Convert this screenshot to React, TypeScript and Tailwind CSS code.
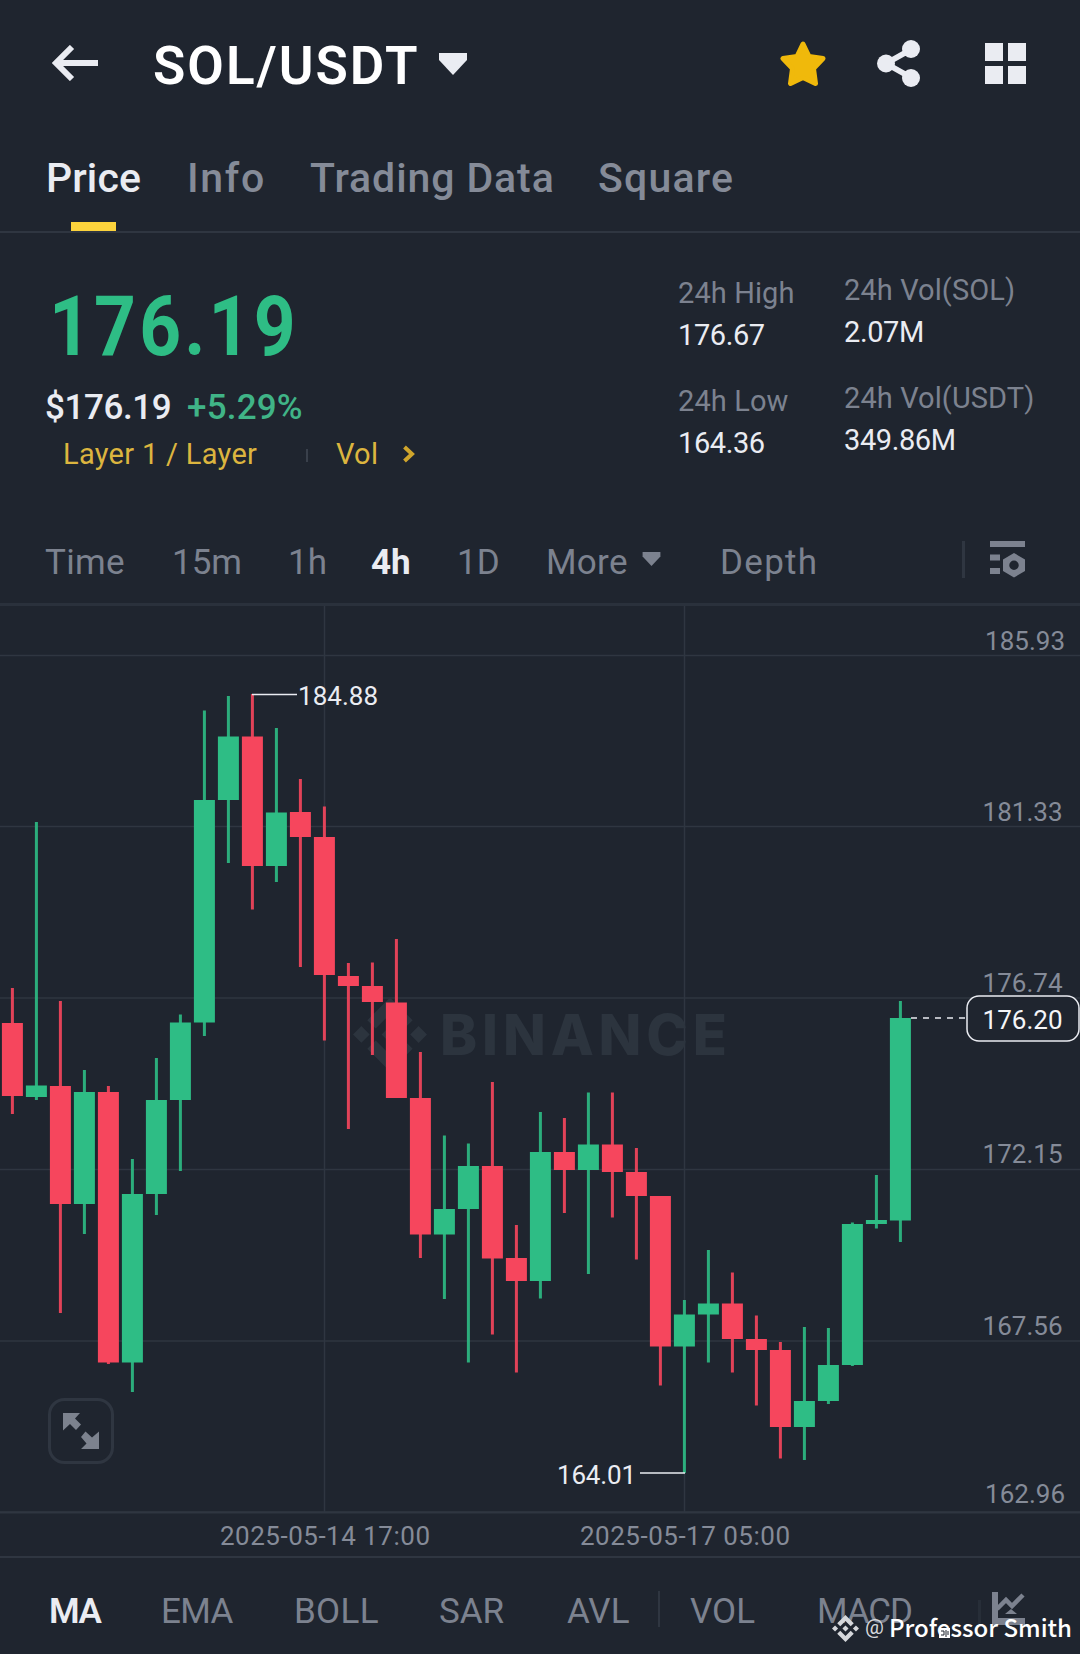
import { useState } from 'react';
import { SiBinance } from 'react-icons/si';

const GREEN = '#2ebd85';
const RED = '#f6465d';
const GRID = '#2f3641';
const MUTED = '#858b98';

const tabs = [
    { label: 'Price', width: 'w-[141px] tracking-[0.1px]' },
    { label: 'Info', width: 'w-[123px] tracking-[1.7px]' },
    { label: 'Trading Data', width: 'w-[288px] tracking-[0.9px]' },
    { label: 'Square', width: 'w-[160px] tracking-[1.2px]' },
];

const stats = [
    [
        { label: '24h High', value: '176.67' },
        { label: '24h Low', value: '164.36' },
    ],
    [
        { label: '24h Vol(SOL)', value: '2.07M' },
        { label: '24h Vol(USDT)', value: '349.86M' },
    ],
];

const periods = [
    { label: 'Time', width: 'w-[127px] tracking-[0.3px]' },
    { label: '15m', width: 'w-[116px]' },
    { label: '1h', width: 'w-[83px]' },
    { label: '4h', width: 'w-[86px]' },
    { label: '1D', width: 'w-[89px]' },
    { label: 'More', width: 'w-[174px] tracking-[0.3px]', caret: true },
    { label: 'Depth', width: 'w-[242px] tracking-[1.3px]' },
];

const mainIndicators = [
    { label: 'MA', width: 'w-[112px] tracking-[-1.5px]' },
    { label: 'EMA', width: 'w-[133px] tracking-[-0.6px]' },
    { label: 'BOLL', width: 'w-[145px] tracking-[0.3px]' },
    { label: 'SAR', width: 'w-[128px]' },
    { label: 'AVL', width: 'w-[91px]' },
];

const subIndicators = [
    { label: 'VOL', width: 'w-[127px]' },
    { label: 'MACD', width: 'w-[161px] tracking-[-1.1px]' },
];

// [up, high, bodyTop, bodyBottom, low] in chart units
const candles: [boolean, number, number, number, number][] = [
    [false, 988, 1023, 1096, 1114],
    [true, 822, 1085.5, 1097, 1100],
    [false, 1001, 1086, 1204, 1313],
    [true, 1070, 1092, 1204, 1234],
    [false, 1086, 1092, 1362.5, 1364],
    [true, 1159, 1194, 1362.5, 1392],
    [true, 1058, 1100, 1194, 1215],
    [true, 1014.5, 1022.5, 1100, 1171],
    [true, 710.5, 800, 1022.5, 1036],
    [true, 696, 736.5, 800, 863],
    [false, 694, 736.5, 866, 909.5],
    [true, 728, 812.5, 866, 882],
    [false, 779, 812, 837, 967],
    [false, 806.5, 837, 975, 1040.5],
    [false, 963, 976, 986, 1129],
    [false, 962.5, 986, 1002, 1055],
    [false, 939, 1002.5, 1098, 1098],
    [false, 1052, 1098, 1234.5, 1258],
    [true, 1135.5, 1209, 1234.5, 1299],
    [true, 1143.5, 1166, 1209, 1362.5],
    [false, 1082, 1166, 1258.5, 1334.5],
    [false, 1225, 1258, 1281, 1372.5],
    [true, 1112, 1152, 1281, 1298.5],
    [false, 1118, 1152, 1170, 1213],
    [true, 1092.5, 1144.5, 1170, 1274],
    [false, 1092.5, 1144.5, 1172, 1217.5],
    [false, 1148, 1172, 1196, 1259.5],
    [false, 1196, 1196, 1346.5, 1385.5],
    [true, 1300, 1314.5, 1346.5, 1473],
    [true, 1250, 1303.5, 1314.5, 1362.5],
    [false, 1272.5, 1303.5, 1339, 1372.5],
    [false, 1315.5, 1339, 1350, 1405.5],
    [false, 1342, 1350, 1427, 1458.5],
    [true, 1327, 1401, 1427, 1460],
    [true, 1328, 1365, 1401, 1404],
    [true, 1222.5, 1224, 1365, 1366],
    [true, 1175, 1220, 1224, 1228.5],
    [true, 1001, 1018, 1220.5, 1242],
];

const priceTicks = [
    { line: 655.5, label: '185.93', x: 985, y: 650 },
    { line: 826.5, label: '181.33', x: 982.5, y: 821 },
    { line: 998, label: '176.74', x: 982.5, y: 992 },
    { line: 1169.5, label: '172.15', x: 982.5, y: 1163 },
    { line: 1341, label: '167.56', x: 982.5, y: 1334.5 },
    { line: 1512, label: '162.96', x: 985, y: 1503 },
];

const Caret = ({ className }: { className: string }) => (
    <svg viewBox="0 0 28 22" className={className} fill="currentColor">
        <path d="M0 0H28V7L14 22L0 7Z" />
    </svg>
);

const Header = () => (
    <header className="h-[126px] flex items-center text-[#eaecf2]">
        <svg viewBox="0 0 46 36" className="w-[46px] h-[36px] ml-[52px]" fill="none" stroke="currentColor" strokeWidth="6">
            <path d="M20 2L4 18L20 34M4 18H46" />
        </svg>
        <h1 className="mt-[6px] ml-[55px] w-[286px] text-[53px] font-semibold leading-none tracking-[2px] text-white">SOL/USDT</h1>
        <Caret className="w-[28px] h-[22px] mt-[1px]" />
        <svg viewBox="0 0 46 48" className="w-[46px] h-[48px] ml-[313px] mt-[2px]" fill="#f0b90b" stroke="#f0b90b" strokeWidth="5" strokeLinejoin="round">
            <path d="M23 4L29 16.5L43 18.5L33.5 28.5L35.5 43.5L23 37.5L10.5 43.5L12.5 28.5L3 18.5L17 16.5Z" />
        </svg>
        <svg viewBox="0 0 43 47" className="w-[43px] h-[47px] ml-[51px]" fill="currentColor">
            <path d="M9 23.5L34 9.5M9 23.5L34 37.5" stroke="currentColor" strokeWidth="5.5" />
            <circle cx="9" cy="23.5" r="9" />
            <circle cx="34" cy="9" r="9" />
            <circle cx="34" cy="38" r="9" />
        </svg>
        <div className="ml-[65px] grid grid-cols-2 gap-[5px]">
            {[0, 1, 2, 3].map((i) => (
                <span key={i} className="w-[18px] h-[18px] bg-[#eaecf2]" />
            ))}
        </div>
    </header>
);

const Ticker = () => (
    <section className="h-[288px] flex">
        <div className="w-[678px] pt-[49px]">
            <div className="ml-[49px] origin-left scale-x-[0.88] text-[83px] leading-[90px] font-bold tracking-[3.6px] text-[#2ebd85]">176.19</div>
            <div className="mt-[14px] pl-[45px] flex text-[35px] leading-[44px] font-medium">
                <span className="w-[142px] tracking-[-0.4px] text-[#eaecf2]">$176.19</span>
                <span className="tracking-[0.2px] text-[#40b487]">+5.29%</span>
            </div>
            <div className="mt-[5px] pl-[63px] h-[40px] flex items-center text-[29px] text-[#dcb53f]">
                <span className="w-[243px] tracking-[0.3px]">Layer 1 / Layer</span>
                <span className="w-[2px] h-[13px] bg-[#39404b]" />
                <span className="ml-[28px] w-[67px] tracking-[0.3px]">Vol</span>
                <svg viewBox="0 0 12 18" className="w-[12px] h-[18px] mb-[2px]" fill="none" stroke="#cfa52c" strokeWidth="4">
                    <path d="M1.5 2L9 9L1.5 16" />
                </svg>
            </div>
        </div>
        {stats.map((column, i) => (
            <div key={i} className={`flex flex-col gap-6 ${i === 0 ? 'w-[166px] pt-[39px]' : 'pt-[36px]'}`}>
                {column.map((stat) => (
                    <div key={stat.label} className="text-[29px] leading-[42px]">
                        <div className="whitespace-nowrap tracking-[0.1px] text-[#7c828f]">{stat.label}</div>
                        <div className="text-[#eaecf2] tracking-[-0.4px]">{stat.value}</div>
                    </div>
                ))}
            </div>
        ))}
    </section>
);

const Chart = () => (
    <svg viewBox="0 606 1080 950" className="block w-[1080px] h-[950px]" fontSize="26" fill={MUTED}>
        <g stroke={GRID} strokeWidth="1.5">
            {priceTicks.map((tick) => (
                <line key={tick.label} x1="0" x2="1080" y1={tick.line} y2={tick.line} />
            ))}
            <line x1="324.5" x2="324.5" y1="606" y2="1512" />
            <line x1="684.5" x2="684.5" y1="606" y2="1512" />
        </g>

        <g fill="#2c343e">
            <SiBinance x="353" y="997.5" size={74} color="#2c343e" />
            <text x="440" y="1054.5" fontSize="56" fontWeight="800" fontFamily="Inter, sans-serif" textLength="287">BINANCE</text>
        </g>

        {candles.map(([up, high, top, bottom, low], i) => {
            const cx = 12.4 + i * 24;
            return (
                <g key={i} fill={up ? GREEN : RED}>
                    <rect x={cx - 1.5} y={high} width="3" height={low - high} opacity="0.9" />
                    <rect x={cx - 10.5} y={top} width="21" height={bottom - top} />
                </g>
            );
        })}

        {priceTicks.map((tick) => (
            <text key={tick.label} x={tick.x} y={tick.y} textLength="80">{tick.label}</text>
        ))}

        {/* High / low markers */}
        <g stroke="#eaecf2" strokeWidth="1.5">
            <line x1="252" x2="297" y1="694.5" y2="694.5" />
            <line x1="640" x2="685" y1="1473" y2="1473" />
            <line x1="911" x2="966" y1="1018" y2="1018" strokeDasharray="6 6" />
        </g>
        <g fill="#eaecf2">
            <text x="298" y="705" textLength="80">184.88</text>
            <text x="557" y="1483.5" textLength="79">164.01</text>
        </g>

        <rect x="967" y="996" width="112" height="45" rx="12" fill="#1f252f" stroke="#eaecf2" strokeWidth="1.5" />
        <text x="982.5" y="1028.5" textLength="80" fill="#f4f5f8">176.20</text>

        <line x1="0" x2="1080" y1="1512.5" y2="1512.5" stroke={GRID} strokeWidth="2" />
        <text x="220" y="1544.5" textLength="210">2025-05-14 17:00</text>
        <text x="580" y="1544.5" textLength="210">2025-05-17 05:00</text>

        {/* Fullscreen toggle */}
        <rect x="49.5" y="1399.5" width="63" height="63" rx="15" fill="none" stroke="#2f3641" strokeWidth="3" />
        <g fill="#7c828e">
            <path d="M63 1413H80L75 1418.5L81 1424.5L76 1430L70 1424L63 1430.5Z" />
            <path d="M99 1449H81L86.5 1443.5L81 1437L85.5 1431.5L92 1437.5L99 1431.5Z" />
        </g>
    </svg>
);

const AuthorTag = () => (
    <div className="absolute left-[832px] top-[1605px] flex items-center h-[44px] text-white">
        <SiBinance size={27} color="#d5d7db" className="mt-[2px]" />
        <span className="ml-[6px] w-[24px] text-[21px] text-[#d5d7db] font-[Roboto,sans-serif] leading-none">@</span>
        <span className="text-[24px] font-medium font-['Noto_Sans_CJK_SC',sans-serif] leading-[44px] whitespace-nowrap">Professor Smith</span>
        <svg viewBox="0 0 11 10" className="absolute left-[107px] top-[23px] w-[11px] h-[10px]">
            <path d="M0 0H11V10H0Z" fill="#ffffff" />
            <path d="M2 3H5V7H2M7 2V9M9 3V7" stroke="#1f252f" strokeWidth="1" fill="none" />
        </svg>
    </div>
);

export default function App() {
    const [tab, setTab] = useState('Price');
    const [period, setPeriod] = useState('4h');
    const [indicator, setIndicator] = useState('MA');

    return (
        <div className="relative w-[1080px] h-[1654px] overflow-hidden bg-[#1f252f] font-[Roboto,sans-serif]">
            <Header />

            <nav className="h-[107px] flex pl-[46px] border-b-2 border-[#2f3641] text-[41px] font-medium">
                {tabs.map((t) => (
                    <button
                        key={t.label}
                        onClick={() => setTab(t.label)}
                        className={`relative text-left whitespace-nowrap ${t.width} ${tab === t.label ? 'text-[#eaecf2]' : 'text-[#858b98]'}`}
                    >
                        {t.label}
                        {tab === t.label && <span className="absolute left-[25px] bottom-0 w-[45px] h-[9px] bg-[#fcd33c]" />}
                    </button>
                ))}
            </nav>

            <Ticker />

            <nav className="h-[85px] flex items-center pl-[45px] pt-[2px] border-b-3 border-[#2a313c] text-[35px] text-[#7c828f]">
                {periods.map((p) => (
                    <button
                        key={p.label}
                        onClick={() => setPeriod(p.label)}
                        className={`flex items-center ${p.width} ${period === p.label ? 'font-bold text-[#eaecf2]' : ''}`}
                    >
                        {p.label}
                        {p.caret && <Caret className="w-[19px] h-[14px] ml-[14px] mb-[8px]" />}
                    </button>
                ))}
                <span className="w-[3px] h-[37px] mb-[8px] bg-[#2f3641]" />
                <svg viewBox="0 0 35 37" className="w-[35px] h-[37px] ml-[25px] mb-[8px]" fill="currentColor">
                    <path d="M0 0H35V6H0ZM0 13.5H10V19.5H0ZM0 27H10V33H0Z" />
                    <path fillRule="evenodd" d="M24 12L35 18.5V30L24 36.5L13 30V18.5ZM24 19.5A4.7 4.7 0 1 0 24 29A4.7 4.7 0 1 0 24 19.5Z" />
                </svg>
            </nav>

            <Chart />

            <nav className="h-[98px] pt-[12px] flex items-center pl-[49px] border-t-2 border-[#2f3641] text-[35px] text-[#7c828f]">
                {mainIndicators.map((m) => (
                    <button
                        key={m.label}
                        onClick={() => setIndicator(m.label)}
                        className={`text-left ${m.width} ${indicator === m.label ? 'font-semibold text-[#eaecf2]' : ''}`}
                    >
                        {m.label}
                    </button>
                ))}
                <span className="w-[2px] h-[36px] mb-[6px] mr-[30px] bg-[#2f3641]" />
                {subIndicators.map((m) => (
                    <button key={m.label} className={`text-left ${m.width}`}>{m.label}</button>
                ))}
                <span className="w-[3px] h-[25px] bg-[#272e38]" />
                <svg viewBox="0 0 33 33" className="w-[33px] h-[33px] ml-[11px] mb-[8px]" fill="currentColor">
                    <path d="M0 0H6V26H33V33H0Z" />
                    <path d="M5 17L14 8L20 14L31 3" fill="none" stroke="currentColor" strokeWidth="4.5" />
                    <path d="M13 22L19 17L25 22Z" />
                </svg>
            </nav>

            <AuthorTag />
        </div>
    );
}
